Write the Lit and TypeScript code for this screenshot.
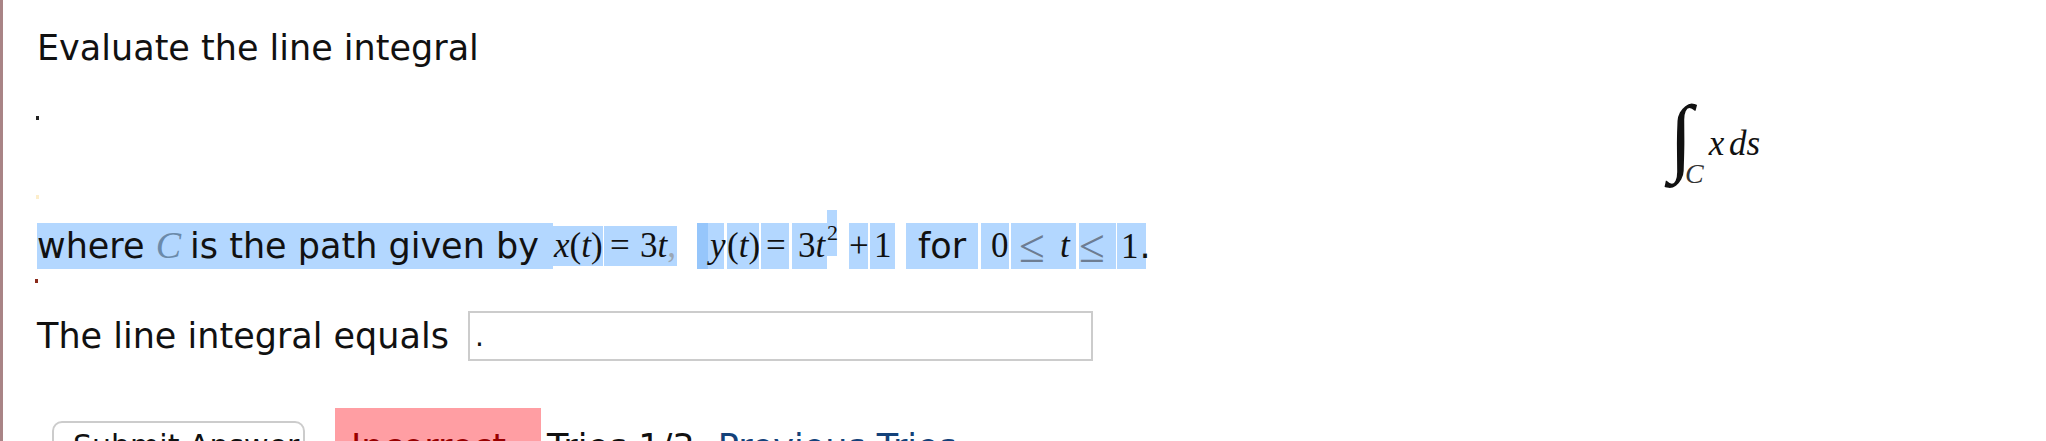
import { LitElement, html, css } from "lit";
import { customElement } from "lit/decorators.js";

type Seg = { from: number; to: number; cls: string; pad: number; body: unknown };

const I = (s: string) => html`<i>${s}</i>`;

const SEGS: Seg[] = [
  { from: 38, to: 554, cls: "tall", pad: 0, body: html`where <span class="cal">C</span> is the path given by` },
  { from: 554, to: 604, cls: "short m", pad: 1, body: html`${I("x")}(${I("t")})` },
  { from: 605, to: 636, cls: "short m", pad: 6, body: "=" },
  { from: 636, to: 678, cls: "short m", pad: 5, body: html`3${I("t")}<span class="comma">,</span>` },
  { from: 698, to: 725, cls: "tall m dark", pad: 13, body: I("y") },
  { from: 728, to: 760, cls: "tall m", pad: 0, body: html`(${I("t")})` },
  { from: 762, to: 790, cls: "tall m", pad: 5, body: "=" },
  { from: 793, to: 828, cls: "tall m", pad: 6, body: html`3${I("t")}` },
  { from: 828, to: 838, cls: "sup", pad: 0, body: "2" },
  { from: 850, to: 869, cls: "tall m", pad: 0, body: "+" },
  { from: 871, to: 896, cls: "tall m", pad: 4, body: "1" },
  { from: 907, to: 979, cls: "tall", pad: 12, body: "for" },
  { from: 982, to: 1010, cls: "tall m", pad: 10, body: "0" },
  { from: 1012, to: 1059, cls: "tall le", pad: 8, body: "≤" },
  { from: 1059, to: 1077, cls: "tall m", pad: 2, body: I("t") },
  { from: 1080, to: 1117, cls: "tall le", pad: 0, body: "≤" },
  { from: 1118, to: 1147, cls: "tall m", pad: 4, body: html`1<span class="dot">.</span>` },
];

const MARKS = [
  { cls: "mark k", x: 36, y: 116 },
  { cls: "mark y", x: 36, y: 195 },
  { cls: "mark r", x: 35, y: 279 },
  { cls: "mark e", x: 0, y: 145 },
  { cls: "mark e", x: 0, y: 167 },
  { cls: "mark e", x: 0, y: 191 },
];

@customElement("app-root")
export class AppRoot extends LitElement {
  static styles = css`
    :host { display: block; height: 441px; overflow: hidden; background: #fff; color: #111; font-family: "DejaVu Sans", sans-serif; font-size: 35px; }
    .page { border-left: 3px solid #a98486; padding: 26px 0 0 34px; box-sizing: border-box; height: 441px; overflow: hidden; position: relative; }
    .line { line-height: 44px; white-space: nowrap; }
    .display { height: 131px; margin-top: 22px; display: flex; align-items: flex-start; padding-left: 1632px; }
    .int { font: italic 86px/88px "Liberation Serif", serif; width: 32px; }
    .sub { font: italic 28px/28px "Liberation Serif", serif; margin: 68px 0 0 -16px; color: #333; }
    .xds { font: italic 35px/36px "Liberation Serif", serif; margin: 34px 0 0 5px; word-spacing: -4px; }
    .hl { display: flex; height: 46px; align-items: flex-start; white-space: nowrap; }
    .s { background: #b3d7ff; box-sizing: border-box; overflow: visible; }
    .tall { height: 46px; line-height: 46px; }
    .short { height: 40px; margin-top: 3px; line-height: 40px; }
    .sup { height: 46px; margin-top: -13px; line-height: 46px; font: 22px/46px "Liberation Serif", serif; }
    .m { font-family: "Liberation Serif", serif; font-size: 35px; }
    .dark { background: linear-gradient(to right, #96c6fb 11px, #b3d7ff 11px); }
    .cal { font: italic 38px/38px "Liberation Serif", serif; color: #6b8aaa; margin-right: -2px; }
    .le { font: 47px/46px "Liberation Serif", serif; color: #6d7d92; }
    .comma { color: #9aa6b4; }
    .dot { font-family: "DejaVu Sans", sans-serif; margin-left: 1px; }
    .row3 { display: flex; align-items: center; margin-top: 42px; height: 50px; white-space: nowrap; }
    .input { width: 625px; height: 50px; box-sizing: border-box; border: 2px solid #ccc; margin-left: 19px; padding-left: 5px; font-size: 28px; line-height: 48px; }
    .row4 { display: flex; margin-top: 47px; align-items: flex-start; white-space: nowrap; }
    .btn { width: 253px; height: 50px; margin: 13px 30px 0 15px; border: 2px solid #ccc; border-radius: 10px; box-sizing: border-box; font-size: 30px; padding: 5px 0 0 19px; }
    .bad { width: 206px; height: 60px; background: #ff9ea3; color: #900; padding: 19px 0 0 16px; box-sizing: border-box; }
    .tries { padding-top: 19px; margin-left: 6px; }
    .tries a { color: #14427a; margin-left: 12px; }
    .mark { position: absolute; width: 3px; height: 4px; }
    .k { background: #222; }
    .y { background: #fdeecb; }
    .r { background: #8a2a1a; }
    .e { background: #111; height: 3px; }
  `;
  render() {
    let cursor = 38;
    return html`<div class="page">
      <div class="line">Evaluate the line integral</div>
      <div class="display"><span class="int">∫</span><span class="sub">C</span><span class="xds">x ds</span></div>
      <div class="hl">
        ${SEGS.map((s) => {
          const gap = s.from - cursor;
          cursor = s.to;
          return html`<span class="s ${s.cls}" style="margin-left:${gap}px;width:${s.to - s.from}px;padding-left:${s.pad}px">${s.body}</span>`;
        })}
      </div>
      <div class="row3"><span>The line integral equals</span><div class="input">.</div></div>
      <div class="row4"><div class="btn">Submit Answer</div><div class="bad">Incorrect.</div><div class="tries">Tries 1/3 <a>Previous Tries</a></div></div>
      ${MARKS.map((m) => html`<span class=${m.cls} style="left:${m.x - 3}px;top:${m.y}px"></span>`)}
    </div>`;
  }
}
